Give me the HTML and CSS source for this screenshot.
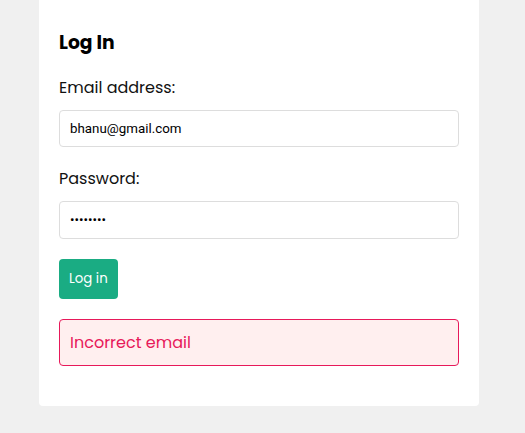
FILE: index.html
```html
<!DOCTYPE html>
<html lang="en">
<head>
<meta charset="UTF-8">
<meta name="viewport" content="width=device-width, initial-scale=1.0">
<title>Log In</title>
<link rel="stylesheet" href="styles.css">
</head>
<body>

<form class="login">
  <h3>Log In</h3>
  <label>Email address:</label>
  <input type="email" value="bhanu@gmail.com">
  <label>Password:</label>
  <input type="password" value="12345678">
  <button type="button">Log in</button>
  <div class="error">Incorrect email</div>
</form>

</body>
</html>
```

FILE: styles.css
```css
body {
  background: #f0f0f0;
  margin: 0;
  font-family: "Poppins", "Open Sans", sans-serif;
  line-height: 1.5;
}
form.login {
  width: 400px;
  margin: -10px 0 0 39px;
  padding: 20px;
  background: #fff;
  border-radius: 4px;
}
h3 {
  font-size: 18.72px;
  margin: 18.72px 0;
  color: #000;
}
label {
  display: block;
  font-size: 16px;
  color: #111;
}
input {
  display: block;
  box-sizing: border-box;
  width: 100%;
  padding: 10px;
  margin: 10px 0 20px;
  border: 1px solid #ddd;
  border-radius: 4px;
  font-family: Roboto, sans-serif;
  font-size: 13.33px;
  line-height: 15.5px;
  color: #000;
  outline: none;
}
button {
  background: #1aac83;
  border: 0;
  color: #fff;
  padding: 10px;
  font-family: "Poppins", "Open Sans", sans-serif;
  font-size: 13.33px;
  line-height: 20px;
  border-radius: 4px;
  cursor: pointer;
}
.error {
  padding: 10px;
  background: #ffefef;
  border: 1px solid #e7195a;
  color: #e7195a;
  border-radius: 4px;
  margin: 20px 0;
  font-size: 16px;
  line-height: 25px;
}
```
